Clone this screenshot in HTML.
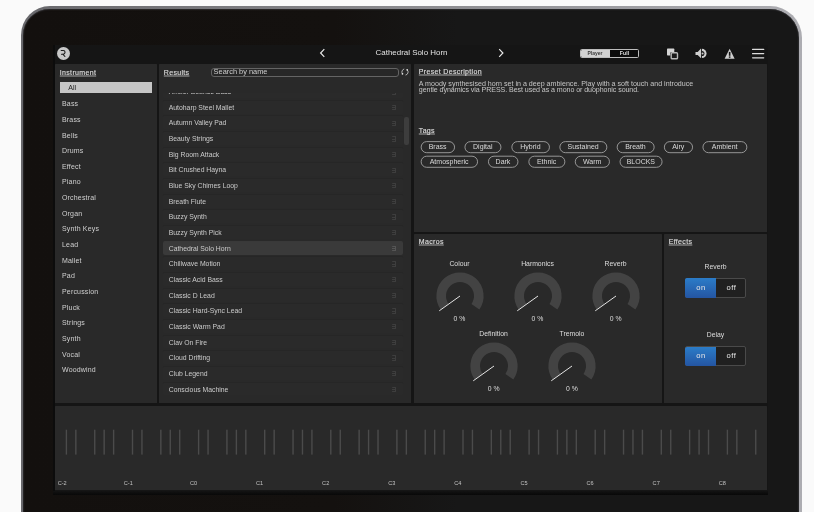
<!DOCTYPE html>
<html lang="en"><head><meta charset="utf-8"><title>Preset Browser</title>
<style>
*{box-sizing:border-box;margin:0;padding:0}
html,body{width:814px;height:512px;overflow:hidden;background:#fafafa}
body{position:relative;font-family:"Liberation Sans", sans-serif;font-size:7px;color:#d8d8d8;-webkit-font-smoothing:antialiased}
.abs{position:absolute}
.laptop{position:absolute;left:20.7px;top:6.1px;width:781.1px;height:560px;border-radius:29px 32px 0 0;background:linear-gradient(90deg,#68686c 0%,#8a8a8e 50%,#adadb2 100%)}
.bezel{position:absolute;left:2.8px;top:2.7px;right:3px;bottom:0;border-radius:26.5px 29px 0 0;box-shadow:inset 0 0 1.4px 0.4px #3c3c40;background:linear-gradient(90deg,#13100e 0%,#14110f 40%,#171717 56%,#171717 100%)}
.app{position:absolute;left:52.6px;top:45px;width:715.2px;height:449.6px;background:#151515;border-left:2px solid #0c0c0c}
.appb{position:absolute;left:52.6px;top:490.6px;width:715.2px;height:4px;background:linear-gradient(180deg,#131313,#080808)}
.panel{position:absolute;background:#292929;border-radius:0.6px}
.h{position:absolute;font-weight:400;font-size:7px;line-height:8px;color:#dcdcdc;letter-spacing:0.33px;-webkit-text-stroke:0.18px #d6d6d6;text-decoration:underline;text-decoration-thickness:0.7px;text-decoration-color:#a8a8a8;text-underline-offset:0.8px;white-space:nowrap;transform:translateY(1.5px)}
.t{position:absolute;white-space:nowrap;line-height:8px}
.inst{left:62px;font-size:7px;color:#d0d0d0;letter-spacing:0.17px}
.row{position:absolute;left:163px;width:240px;height:13.9px;background:#2a2a2a;border-top:1px solid #262626;border-radius:1.5px}
.row span{position:absolute;left:5.7px;top:3px;line-height:8px;font-size:6.85px;color:#cbcbcb;white-space:nowrap}
.row i{position:absolute;right:6.9px;top:4.1px;width:4.5px;height:5.3px;border:0.9px solid #3e3e3e;border-left:none;border-radius:0.4px}
.row i:after{content:"";position:absolute;left:0;right:0;top:1.3px;height:0.9px;background:#3e3e3e}
.row.sel{background:#3a3a3a;border-top-color:#393939;border-radius:2px;height:14.4px}
.row.sel i{border-color:#555}
.row.sel i:after{background:#555}
.tag{position:absolute;height:12px;text-align:center;font-size:7px;line-height:12px;color:#dadada;white-space:nowrap}
.klabel{position:absolute;top:479.5px;font-size:5.6px;line-height:7px;color:#c2c2c2;white-space:nowrap}
.bk{position:absolute;top:429.5px;width:1px;height:24.5px;background:#505050}
.knoblabel{position:absolute;width:80px;text-align:center;font-size:6.85px;line-height:8px;color:#dedede;white-space:nowrap}
.tog{position:absolute;left:685px;width:61px;height:19.4px;border-radius:2px;background:#202020;border:0.8px solid #4a4a4a}
.tog .on{position:absolute;left:-0.8px;top:-0.8px;width:30.8px;height:19.4px;border-radius:2px 0 0 2px;background:linear-gradient(180deg,#2b7cc8 0%,#2455a2 100%);}
.tog span{position:absolute;top:3.9px;width:30px;text-align:center;font-size:7.6px;line-height:9px;color:#e8e8e8;letter-spacing:0.5px}
</style></head>
<body>
<div id="w" style="position:absolute;left:0;top:0;width:814px;height:512px;will-change:transform">
<div class="laptop"><div class="bezel"></div></div>
<div class="app"></div><div class="appb"></div>
<div class="abs" style="left:56.8px;top:47.1px;width:12.9px;height:12.9px;border-radius:50%;background:#c8c8c8"></div>
<svg class="abs" style="left:56.8px;top:47.1px" width="12.9" height="12.9" viewBox="0 0 12.9 12.9"><path d="M4.2 3.5 H6.2 A1.85 1.85 0 0 1 6.2 7.2 H4.5 M5.9 7.2 L7.9 9.5" fill="none" stroke="#1c1c1c" stroke-width="1.1" stroke-linecap="round"/></svg>
<svg class="abs" style="left:318px;top:47px" width="10" height="12" viewBox="0 0 10 12"><path d="M6.3 2.2 L2.6 6 L6.3 9.8" fill="none" stroke="#e8e8e8" stroke-width="1.2"/></svg>
<svg class="abs" style="left:496px;top:47px" width="10" height="12" viewBox="0 0 10 12"><path d="M3.2 2.2 L6.9 6 L3.2 9.8" fill="none" stroke="#e8e8e8" stroke-width="1.2"/></svg>
<div class="t" style="left:311.5px;width:200px;text-align:center;top:48.1px;font-size:7.95px;line-height:9px;color:#e2e2e2">Cathedral Solo Horn</div>
<div class="abs" style="left:580px;top:49px;width:59px;height:8.8px;border:0.7px solid #bdbdbd;border-radius:1.6px;background:#0c0c0c"></div>
<div class="abs" style="left:580.6px;top:49.6px;width:29.2px;height:7.6px;border-radius:1px 0 0 1px;background:#d2d2d2"></div>
<div class="t" style="left:580px;width:30px;text-align:center;top:50.1px;font-size:5px;line-height:7px;font-weight:700;color:#3c3c3c;letter-spacing:0">Player</div>
<div class="t" style="left:610px;width:29px;text-align:center;top:50.1px;font-size:5.1px;line-height:7px;font-weight:700;color:#e0e0e0;letter-spacing:0.1px">Full</div>
<svg class="abs" style="left:666px;top:47.5px" width="13" height="13" viewBox="0 0 13 13"><rect x="1" y="0.5" width="7.3" height="7" rx="0.7" fill="#d4d4d4"/><rect x="4.3" y="3.9" width="8.1" height="7.8" rx="1.4" fill="#151515"/><rect x="5.2" y="4.8" width="6.3" height="6" rx="0.9" fill="#1a1a1a" stroke="#b8b8b8" stroke-width="1.4"/></svg>
<svg class="abs" style="left:694px;top:48px" width="14" height="12" viewBox="0 0 14 12"><path d="M1.5 4 H3.7 L7 0.6 V10.3 L3.7 7 H1.5 Z" fill="#cfcfcf"/><path d="M7.9 0.8 A4.65 4.65 0 0 1 7.9 10.1 Z" fill="#cfcfcf"/><path d="M7.9 2.9 A2.55 2.55 0 0 1 7.9 8 Z" fill="#161616"/><circle cx="8.6" cy="5.45" r="0.95" fill="#cfcfcf"/></svg>
<svg class="abs" style="left:724px;top:48px" width="12" height="12" viewBox="0 0 12 12"><path d="M5.6 0.8 L10.6 10.8 H0.6 Z" fill="#cfcfcf"/><rect x="4.85" y="3.9" width="1.6" height="3.9" fill="#161616"/><rect x="4.85" y="8.4" width="1.6" height="1.4" fill="#161616"/></svg>
<svg class="abs" style="left:752px;top:48px" width="13" height="12" viewBox="0 0 13 12"><path d="M0.6 1.4 H11.7 M0.6 5.6 H11.7 M0.6 9.8 H11.7" stroke="#dcdcdc" stroke-width="1.3" stroke-linecap="round" fill="none"/></svg>
<div class="panel" style="left:55.3px;top:64.3px;width:101.5px;height:338.5px"></div>
<div class="h" style="left:59.8px;top:67.4px">Instrument</div>
<div class="abs" style="left:59.9px;top:82.2px;width:92.5px;height:10.8px;background:#c6c6c6"></div>
<div class="t" style="left:68.3px;top:83.6px;color:#222;font-size:7px">All</div>
<div class="t inst" style="top:100.20px">Bass</div>
<div class="t inst" style="top:115.85px">Brass</div>
<div class="t inst" style="top:131.50px">Bells</div>
<div class="t inst" style="top:147.15px">Drums</div>
<div class="t inst" style="top:162.80px">Effect</div>
<div class="t inst" style="top:178.45px">Piano</div>
<div class="t inst" style="top:194.10px">Orchestral</div>
<div class="t inst" style="top:209.75px">Organ</div>
<div class="t inst" style="top:225.40px">Synth Keys</div>
<div class="t inst" style="top:241.05px">Lead</div>
<div class="t inst" style="top:256.70px">Mallet</div>
<div class="t inst" style="top:272.35px">Pad</div>
<div class="t inst" style="top:288.00px">Percussion</div>
<div class="t inst" style="top:303.65px">Pluck</div>
<div class="t inst" style="top:319.30px">Strings</div>
<div class="t inst" style="top:334.95px">Synth</div>
<div class="t inst" style="top:350.60px">Vocal</div>
<div class="t inst" style="top:366.25px">Woodwind</div>
<div class="panel" style="left:159px;top:64.3px;width:252.3px;height:338.5px"></div>
<div class="h" style="left:163.8px;top:67.4px">Results</div>
<div class="abs" style="left:211.3px;top:68.2px;width:187.7px;height:8.5px;border:1px solid #646464;border-radius:3px;background:#272727"></div>
<div class="t" style="left:213.6px;top:67.1px;font-size:7.4px;line-height:9px;color:#cfcfcf">Search by name</div>
<svg class="abs" style="left:400.1px;top:67.1px" width="10" height="10" viewBox="0 0 10 10"><path d="M4.20 2.01 A3.1 3.1 0 0 0 2.46 6.78" fill="none" stroke="#bdbdbd" stroke-width="0.9"/><path d="M5.54 8.05 A3.1 3.1 0 0 0 7.19 2.81" fill="none" stroke="#bdbdbd" stroke-width="0.9"/><circle cx="2.46" cy="6.78" r="0.85" fill="#e6e6e6"/><circle cx="7.19" cy="2.81" r="0.85" fill="#e6e6e6"/></svg>
<div class="abs" style="left:159px;top:92.7px;width:252.3px;height:310.1px;overflow:hidden">
<div class="row" style="left:4px;top:-8.50px"><span>Amber Bounce Bass</span><i></i></div>
<div class="row" style="left:4px;top:7.15px"><span>Autoharp Steel Mallet</span><i></i></div>
<div class="row" style="left:4px;top:22.80px"><span>Autumn Valley Pad</span><i></i></div>
<div class="row" style="left:4px;top:38.45px"><span>Beauty Strings</span><i></i></div>
<div class="row" style="left:4px;top:54.10px"><span>Big Room Attack</span><i></i></div>
<div class="row" style="left:4px;top:69.75px"><span>Bit Crushed Hayna</span><i></i></div>
<div class="row" style="left:4px;top:85.40px"><span>Blue Sky Chimes Loop</span><i></i></div>
<div class="row" style="left:4px;top:101.05px"><span>Breath Flute</span><i></i></div>
<div class="row" style="left:4px;top:116.70px"><span>Buzzy Synth</span><i></i></div>
<div class="row" style="left:4px;top:132.35px"><span>Buzzy Synth Pick</span><i></i></div>
<div class="row sel" style="left:4px;top:148.00px"><span>Cathedral Solo Horn</span><i></i></div>
<div class="row" style="left:4px;top:163.65px"><span>Chillwave Motion</span><i></i></div>
<div class="row" style="left:4px;top:179.30px"><span>Classic Acid Bass</span><i></i></div>
<div class="row" style="left:4px;top:194.95px"><span>Classic D Lead</span><i></i></div>
<div class="row" style="left:4px;top:210.60px"><span>Classic Hard-Sync Lead</span><i></i></div>
<div class="row" style="left:4px;top:226.25px"><span>Classic Warm Pad</span><i></i></div>
<div class="row" style="left:4px;top:241.90px"><span>Clav On Fire</span><i></i></div>
<div class="row" style="left:4px;top:257.55px"><span>Cloud Drifting</span><i></i></div>
<div class="row" style="left:4px;top:273.20px"><span>Club Legend</span><i></i></div>
<div class="row" style="left:4px;top:288.85px"><span>Conscious Machine</span><i></i></div>
</div>
<div class="abs" style="left:404.4px;top:116.6px;width:4.3px;height:28.4px;border-radius:2px;background:#3d3d3d"></div>
<div class="panel" style="left:413.8px;top:64.3px;width:353.4px;height:168px"></div>
<div class="h" style="left:418.8px;top:66.0px">Preset Description</div>
<div class="t" style="left:418.8px;top:81.2px;font-size:7.1px;line-height:6px;color:#c6c6c6;white-space:normal;width:300px">A moody synthesised horn set in a deep ambience. Play with a soft touch and introduce<br><span style="letter-spacing:-0.075px">gentle dynamics via PRESS. Best used as a mono or duophonic sound.</span></div>
<div class="h" style="left:418.8px;top:125.4px">Tags</div>
<div class="tag" style="left:420.5px;top:141.45px;width:34.3px">Brass</div>
<div class="tag" style="left:464.3px;top:141.45px;width:36.9px">Digital</div>
<div class="tag" style="left:511.2px;top:141.45px;width:38.5px">Hybrid</div>
<div class="tag" style="left:559.2px;top:141.45px;width:47.9px">Sustained</div>
<div class="tag" style="left:616.5px;top:141.45px;width:37.9px">Breath</div>
<div class="tag" style="left:663.7px;top:141.45px;width:29.1px">Airy</div>
<div class="tag" style="left:702.3px;top:141.45px;width:44.8px">Ambient</div>
<div class="tag" style="left:420.5px;top:156.05px;width:57.3px">Atmospheric</div>
<div class="tag" style="left:487.8px;top:156.05px;width:30.4px">Dark</div>
<div class="tag" style="left:528.2px;top:156.05px;width:36.9px">Ethnic</div>
<div class="tag" style="left:574.6px;top:156.05px;width:35.1px">Warm</div>
<div class="tag" style="left:619.4px;top:156.05px;width:42.9px">BLOCKS</div>
<svg class="abs" style="left:413.8px;top:64.3px" width="353" height="168" viewBox="0 0 353 168" fill="none" stroke="#a2a2a2" stroke-width="0.9"><rect x="7.15" y="77.60" width="33.40" height="11.1" rx="5.55"/><rect x="50.95" y="77.60" width="36.00" height="11.1" rx="5.55"/><rect x="97.85" y="77.60" width="37.60" height="11.1" rx="5.55"/><rect x="145.85" y="77.60" width="47.00" height="11.1" rx="5.55"/><rect x="203.15" y="77.60" width="37.00" height="11.1" rx="5.55"/><rect x="250.35" y="77.60" width="28.20" height="11.1" rx="5.55"/><rect x="288.95" y="77.60" width="43.90" height="11.1" rx="5.55"/><rect x="7.15" y="92.20" width="56.40" height="11.1" rx="5.55"/><rect x="74.45" y="92.20" width="29.50" height="11.1" rx="5.55"/><rect x="114.85" y="92.20" width="36.00" height="11.1" rx="5.55"/><rect x="161.25" y="92.20" width="34.20" height="11.1" rx="5.55"/><rect x="206.05" y="92.20" width="42.00" height="11.1" rx="5.55"/></svg>
<div class="panel" style="left:413.8px;top:234.3px;width:247.8px;height:168.5px"></div>
<div class="h" style="left:418.8px;top:236.4px">Macros</div>
<svg class="abs" style="left:429.5px;top:265.8px" width="60" height="60" viewBox="429.5 265.8 60 60"><path d="M444.10 306.58 A18.8 18.8 0 1 1 474.90 306.58" fill="none" stroke="#434343" stroke-width="9.6"/><path d="M459.50 295.80 L438.74 310.61" stroke="#e4e4e4" stroke-width="1" fill="none"/></svg>
<div class="knoblabel" style="left:419.5px;top:260.2px">Colour</div>
<div class="knoblabel" style="left:419.5px;top:315.2px">0 %</div>
<svg class="abs" style="left:507.5px;top:265.8px" width="60" height="60" viewBox="507.5 265.8 60 60"><path d="M522.10 306.58 A18.8 18.8 0 1 1 552.90 306.58" fill="none" stroke="#434343" stroke-width="9.6"/><path d="M537.50 295.80 L516.74 310.61" stroke="#e4e4e4" stroke-width="1" fill="none"/></svg>
<div class="knoblabel" style="left:497.5px;top:260.2px">Harmonics</div>
<div class="knoblabel" style="left:497.5px;top:315.2px">0 %</div>
<svg class="abs" style="left:585.6px;top:265.8px" width="60" height="60" viewBox="585.6 265.8 60 60"><path d="M600.20 306.58 A18.8 18.8 0 1 1 631.00 306.58" fill="none" stroke="#434343" stroke-width="9.6"/><path d="M615.60 295.80 L594.84 310.61" stroke="#e4e4e4" stroke-width="1" fill="none"/></svg>
<div class="knoblabel" style="left:575.6px;top:260.2px">Reverb</div>
<div class="knoblabel" style="left:575.6px;top:315.2px">0 %</div>
<svg class="abs" style="left:463.6px;top:336.0px" width="60" height="60" viewBox="463.6 336.0 60 60"><path d="M478.20 376.78 A18.8 18.8 0 1 1 509.00 376.78" fill="none" stroke="#434343" stroke-width="9.6"/><path d="M493.60 366.00 L472.84 380.81" stroke="#e4e4e4" stroke-width="1" fill="none"/></svg>
<div class="knoblabel" style="left:453.6px;top:330.4px">Definition</div>
<div class="knoblabel" style="left:453.6px;top:385.4px">0 %</div>
<svg class="abs" style="left:542.0px;top:336.0px" width="60" height="60" viewBox="542.0 336.0 60 60"><path d="M556.60 376.78 A18.8 18.8 0 1 1 587.40 376.78" fill="none" stroke="#434343" stroke-width="9.6"/><path d="M572.00 366.00 L551.24 380.81" stroke="#e4e4e4" stroke-width="1" fill="none"/></svg>
<div class="knoblabel" style="left:532.0px;top:330.4px">Tremolo</div>
<div class="knoblabel" style="left:532.0px;top:385.4px">0 %</div>
<div class="panel" style="left:663.6px;top:234.3px;width:103.6px;height:168.5px"></div>
<div class="h" style="left:668.7px;top:236.4px">Effects</div>
<div class="knoblabel" style="left:675.5px;top:262.9px">Reverb</div>
<div class="tog" style="top:278.2px"><div class="on"></div><span style="left:0">on</span><span style="left:30.5px">off</span></div>
<div class="knoblabel" style="left:675.5px;top:331.1px">Delay</div>
<div class="tog" style="top:346.4px"><div class="on"></div><span style="left:0">on</span><span style="left:30.5px">off</span></div>
<div class="panel" style="left:55.3px;top:405.8px;width:711.9px;height:84.6px"></div>
<div class="klabel" style="left:57.7px">C-2</div>
<div class="klabel" style="left:123.8px">C-1</div>
<div class="klabel" style="left:189.9px">C0</div>
<div class="klabel" style="left:256.0px">C1</div>
<div class="klabel" style="left:322.1px">C2</div>
<div class="klabel" style="left:388.2px">C3</div>
<div class="klabel" style="left:454.3px">C4</div>
<div class="klabel" style="left:520.4px">C5</div>
<div class="klabel" style="left:586.5px">C6</div>
<div class="klabel" style="left:652.6px">C7</div>
<div class="klabel" style="left:718.7px">C8</div>
<svg class="abs" style="left:55.3px;top:405.8px" width="712" height="84" viewBox="0 0 712 84" fill="#4b4b4b"><rect x="10.70" y="23.7" width="1.4" height="24.9"/><rect x="20.15" y="23.7" width="1.4" height="24.9"/><rect x="39.03" y="23.7" width="1.4" height="24.9"/><rect x="48.47" y="23.7" width="1.4" height="24.9"/><rect x="57.92" y="23.7" width="1.4" height="24.9"/><rect x="76.80" y="23.7" width="1.4" height="24.9"/><rect x="86.25" y="23.7" width="1.4" height="24.9"/><rect x="105.13" y="23.7" width="1.4" height="24.9"/><rect x="114.57" y="23.7" width="1.4" height="24.9"/><rect x="124.02" y="23.7" width="1.4" height="24.9"/><rect x="142.90" y="23.7" width="1.4" height="24.9"/><rect x="152.35" y="23.7" width="1.4" height="24.9"/><rect x="171.23" y="23.7" width="1.4" height="24.9"/><rect x="180.67" y="23.7" width="1.4" height="24.9"/><rect x="190.12" y="23.7" width="1.4" height="24.9"/><rect x="209.00" y="23.7" width="1.4" height="24.9"/><rect x="218.45" y="23.7" width="1.4" height="24.9"/><rect x="237.33" y="23.7" width="1.4" height="24.9"/><rect x="246.77" y="23.7" width="1.4" height="24.9"/><rect x="256.22" y="23.7" width="1.4" height="24.9"/><rect x="275.10" y="23.7" width="1.4" height="24.9"/><rect x="284.55" y="23.7" width="1.4" height="24.9"/><rect x="303.43" y="23.7" width="1.4" height="24.9"/><rect x="312.87" y="23.7" width="1.4" height="24.9"/><rect x="322.32" y="23.7" width="1.4" height="24.9"/><rect x="341.20" y="23.7" width="1.4" height="24.9"/><rect x="350.65" y="23.7" width="1.4" height="24.9"/><rect x="369.53" y="23.7" width="1.4" height="24.9"/><rect x="378.97" y="23.7" width="1.4" height="24.9"/><rect x="388.42" y="23.7" width="1.4" height="24.9"/><rect x="407.30" y="23.7" width="1.4" height="24.9"/><rect x="416.75" y="23.7" width="1.4" height="24.9"/><rect x="435.63" y="23.7" width="1.4" height="24.9"/><rect x="445.07" y="23.7" width="1.4" height="24.9"/><rect x="454.52" y="23.7" width="1.4" height="24.9"/><rect x="473.40" y="23.7" width="1.4" height="24.9"/><rect x="482.85" y="23.7" width="1.4" height="24.9"/><rect x="501.73" y="23.7" width="1.4" height="24.9"/><rect x="511.17" y="23.7" width="1.4" height="24.9"/><rect x="520.62" y="23.7" width="1.4" height="24.9"/><rect x="539.50" y="23.7" width="1.4" height="24.9"/><rect x="548.95" y="23.7" width="1.4" height="24.9"/><rect x="567.83" y="23.7" width="1.4" height="24.9"/><rect x="577.27" y="23.7" width="1.4" height="24.9"/><rect x="586.72" y="23.7" width="1.4" height="24.9"/><rect x="605.60" y="23.7" width="1.4" height="24.9"/><rect x="615.05" y="23.7" width="1.4" height="24.9"/><rect x="633.93" y="23.7" width="1.4" height="24.9"/><rect x="643.37" y="23.7" width="1.4" height="24.9"/><rect x="652.82" y="23.7" width="1.4" height="24.9"/><rect x="671.70" y="23.7" width="1.4" height="24.9"/><rect x="681.15" y="23.7" width="1.4" height="24.9"/><rect x="700.03" y="23.7" width="1.4" height="24.9"/></svg>
</div></body></html>
